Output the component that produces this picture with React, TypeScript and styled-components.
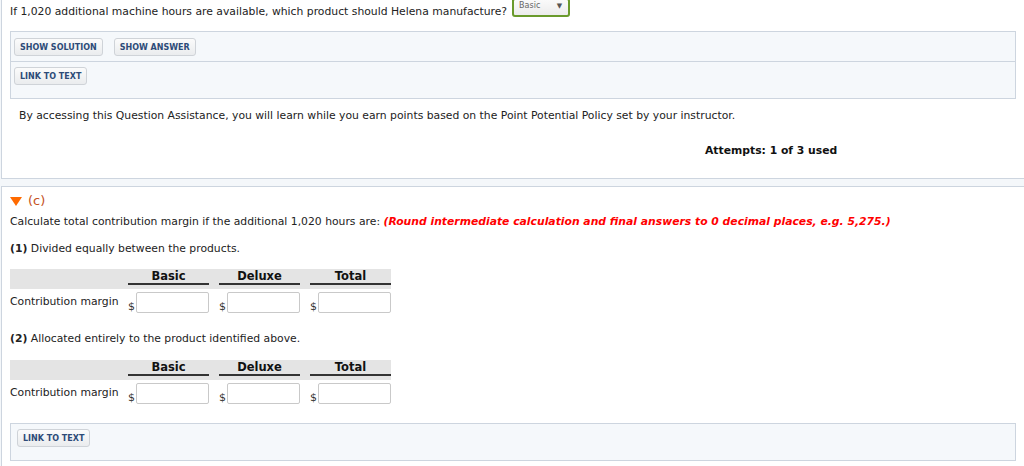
import React from "react";
import styled, { createGlobalStyle } from "styled-components";

const Global = createGlobalStyle`
  html, body { margin: 0; padding: 0; background: #f4f7fa; }
  body { font-family: "DejaVu Sans", Verdana, sans-serif; color: #222; font-size: 10.8px; }
  * { box-sizing: border-box; }
`;

const Page = styled.div`
  width: 1024px;
  height: 466px;
  overflow: hidden;
  padding-left: 1px;
  display: flex;
  flex-direction: column;
  gap: 7px;
`;

const Panel = styled.section<{ $top?: boolean }>`
  background: #fff;
  border-left: 1px solid #cdd5df;
  border-bottom: ${(p) => (p.$top ? "1px solid #cdd5df" : "none")};
  border-top: ${(p) => (p.$top ? "none" : "1px solid #cdd5df")};
  padding: ${(p) => (p.$top ? "0 8px 19px 8px" : "6px 8px 0 8px")};
  width: 1023px;
  flex: ${(p) => (p.$top ? "none" : "1")};
`;

const QuestionRow = styled.div`
  display: flex;
  align-items: flex-start;
  gap: 5px;
`;

const QuestionText = styled.span`
  padding-top: 4px;
  line-height: 16px;
  font-size: 10.8px;
`;

const Select = styled.div`
  margin-top: -2px;
  width: 58px;
  height: 19px;
  border: 2px solid #6a9a2c;
  border-radius: 3px;
  background: linear-gradient(#fafafa, #ececec);
  display: flex;
  justify-content: space-between;
  align-items: flex-start;
  padding: 1px 6px 0 5px;
  font-size: 8px;
  color: #666;
`;

const Arrow = styled.span`
  font-size: 7px;
  color: #555;
  padding-top: 1px;
`;

const AssistBox = styled.div<{ $gap?: number }>`
  margin-top: ${(p) => p.$gap ?? 0}px;
  border: 1px solid #cdd5df;
  background: #f5f8fb;
`;

const AssistRow = styled.div<{ $h: number; $pt: number; $pl: number; $divider?: boolean }>`
  height: ${(p) => p.$h}px;
  padding: ${(p) => p.$pt}px 0 0 ${(p) => p.$pl}px;
  display: flex;
  align-items: flex-start;
  gap: 11px;
  border-bottom: ${(p) => (p.$divider ? "1px solid #cdd5df" : "none")};
`;

const Button = styled.button`
  height: 18px;
  padding: 0 5px;
  border: 1px solid #cfd3d8;
  border-radius: 3px;
  background: linear-gradient(#fbfbfb, #eaecee);
  font-family: "DejaVu Sans", Verdana, sans-serif;
  font-weight: bold;
  font-size: 8px;
  color: #2d4b78;
  cursor: pointer;
`;

const InfoText = styled.p`
  margin: 9px 0 0 9px;
  line-height: 16px;
  font-size: 10.8px;
`;

const Attempts = styled.p`
  margin: 19px 0 0 695px;
  line-height: 16px;
  font-size: 10.8px;
  font-weight: bold;
  color: #111;
`;

const PartHead = styled.div`
  display: flex;
  align-items: center;
  gap: 6px;
  height: 16px;
`;

const PartLetter = styled.span`
  color: #c4521c;
  font-size: 13px;
  line-height: 16px;
`;

const Line = styled.p<{ $gap: number }>`
  margin: ${(p) => p.$gap}px 0 0 0;
  line-height: 16px;
  height: 16px;
  font-size: 10.8px;
`;

const Note = styled.span`
  color: #ff0000;
  font-weight: bold;
  font-style: italic;
`;

const Table = styled.div<{ $gap: number }>`
  margin-top: ${(p) => p.$gap}px;
  width: 381px;
`;

const Grid = styled.div`
  display: grid;
  grid-template-columns: 108px 81px 81px 81px;
  column-gap: 10px;
`;

const HeadRow = styled(Grid)`
  background: #e4e4e4;
  padding-bottom: 4px;
`;

const HeadCell = styled.div`
  text-align: center;
  font-weight: bold;
  font-size: 11.5px;
  line-height: 14px;
  color: #111;
  border-bottom: 2px solid #333;
`;

const BodyRow = styled(Grid)`
  margin-top: 3px;
`;

const RowLabel = styled.div`
  padding-top: 2px;
  line-height: 16px;
  font-size: 10.8px;
  white-space: nowrap;
`;

const Cell = styled.div`
  display: flex;
  align-items: flex-end;
`;

const Dollar = styled.span`
  width: 8px;
  font-size: 11px;
  line-height: 13px;
  color: #333;
`;

const Input = styled.input`
  width: 73px;
  height: 21px;
  border: 1px solid #c9c9c9;
  border-radius: 2px;
  background: #fff;
  padding: 0 3px;
  font-family: "DejaVu Sans", Verdana, sans-serif;
  font-size: 11px;
`;

const Triangle = () => (
  <svg width="12" height="9" viewBox="0 0 12 9">
    <polygon points="0,0 12,0 6,9" fill="#ff6a00" />
  </svg>
);

const CMTable = ({ gap }: { gap: number }) => (
  <Table $gap={gap}>
    <HeadRow>
      <div />
      <HeadCell>Basic</HeadCell>
      <HeadCell>Deluxe</HeadCell>
      <HeadCell>Total</HeadCell>
    </HeadRow>
    <BodyRow>
      <RowLabel>Contribution margin</RowLabel>
      {[0, 1, 2].map((i) => (
        <Cell key={i}>
          <Dollar>$</Dollar>
          <Input />
        </Cell>
      ))}
    </BodyRow>
  </Table>
);

export default function App() {
  return (
    <>
      <Global />
      <Page>
        <Panel $top>
          <QuestionRow>
            <QuestionText>
              If 1,020 additional machine hours are available, which product should Helena manufacture?
            </QuestionText>
            <Select>
              <span>Basic</span>
              <Arrow>▼</Arrow>
            </Select>
          </QuestionRow>
          <AssistBox $gap={11}>
            <AssistRow $h={30} $pt={6} $pl={3} $divider>
              <Button>SHOW SOLUTION</Button>
              <Button>SHOW ANSWER</Button>
            </AssistRow>
            <AssistRow $h={36} $pt={5} $pl={3}>
              <Button>LINK TO TEXT</Button>
            </AssistRow>
          </AssistBox>
          <InfoText>
            By accessing this Question Assistance, you will learn while you earn points based on the Point Potential Policy set by your instructor.
          </InfoText>
          <Attempts>Attempts: 1 of 3 used</Attempts>
        </Panel>
        <Panel>
          <PartHead>
            <Triangle />
            <PartLetter>(c)</PartLetter>
          </PartHead>
          <Line $gap={5}>
            Calculate total contribution margin if the additional 1,020 hours are:{" "}
            <Note>(Round intermediate calculation and final answers to 0 decimal places, e.g. 5,275.)</Note>
          </Line>
          <Line $gap={11}>
            <b>(1)</b> Divided equally between the products.
          </Line>
          <CMTable gap={12} />
          <Line $gap={18}>
            <b>(2)</b> Allocated entirely to the product identified above.
          </Line>
          <CMTable gap={13} />
          <AssistBox $gap={19}>
            <AssistRow $h={36} $pt={5} $pl={6}>
              <Button>LINK TO TEXT</Button>
            </AssistRow>
          </AssistBox>
        </Panel>
      </Page>
    </>
  );
}
